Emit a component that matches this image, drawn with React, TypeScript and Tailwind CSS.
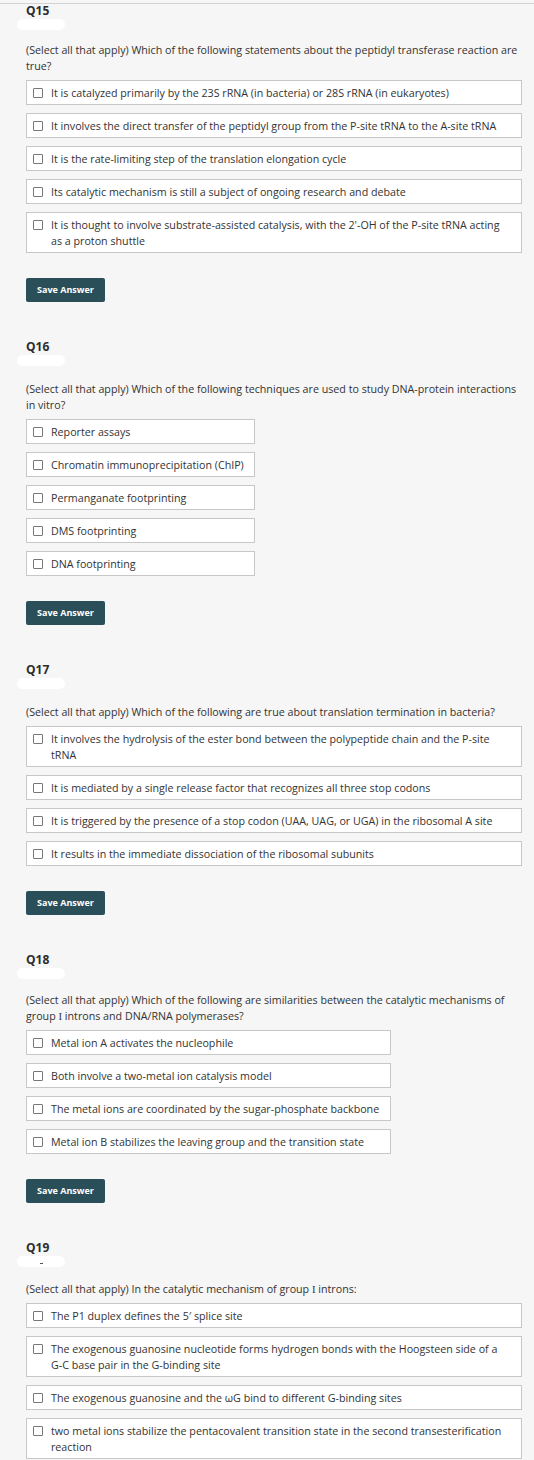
import React from "react";

type Q = {
  label: string;
  text: React.ReactNode;
  options: React.ReactNode[];
  width: string;
  dash?: boolean;
  textGap: string;
};

const I = () => <span style={{ fontFamily: "'Liberation Serif', serif" }}>I</span>;

const questions: Q[] = [
  {
    label: "Q15",
    textGap: "mt-[12px]",
    text: "(Select all that apply) Which of the following statements about the peptidyl transferase reaction are true?",
    width: "w-[496px]",
    options: [
      "It is catalyzed primarily by the 23S rRNA (in bacteria) or 28S rRNA (in eukaryotes)",
      "It involves the direct transfer of the peptidyl group from the P-site tRNA to the A-site tRNA",
      "It is the rate-limiting step of the translation elongation cycle",
      "Its catalytic mechanism is still a subject of ongoing research and debate",
      "It is thought to involve substrate-assisted catalysis, with the 2'-OH of the P-site tRNA acting as a proton shuttle",
    ],
  },
  {
    label: "Q16",
    textGap: "mt-[15px]",
    text: "(Select all that apply) Which of the following techniques are used to study DNA-protein interactions in vitro?",
    width: "w-[229px]",
    options: [
      "Reporter assays",
      "Chromatin immunoprecipitation (ChIP)",
      "Permanganate footprinting",
      "DMS footprinting",
      "DNA footprinting",
    ],
  },
  {
    label: "Q17",
    textGap: "mt-[15px]",
    text: "(Select all that apply) Which of the following are true about translation termination in bacteria?",
    width: "w-[496px]",
    options: [
      "It involves the hydrolysis of the ester bond between the polypeptide chain and the P-site tRNA",
      "It is mediated by a single release factor that recognizes all three stop codons",
      "It is triggered by the presence of a stop codon (UAA, UAG, or UGA) in the ribosomal A site",
      "It results in the immediate dissociation of the ribosomal subunits",
    ],
  },
  {
    label: "Q18",
    textGap: "mt-[13px]",
    text: (
      <>
        (Select all that apply) Which of the following are similarities between the catalytic mechanisms of group <I /> introns and DNA/RNA polymerases?
      </>
    ),
    width: "w-[365px]",
    options: [
      "Metal ion A activates the nucleophile",
      "Both involve a two-metal ion catalysis model",
      "The metal ions are coordinated by the sugar-phosphate backbone",
      "Metal ion B stabilizes the leaving group and the transition state",
    ],
  },
  {
    label: "Q19",
    textGap: "mt-[14px]",
    dash: true,
    text: (
      <>
        (Select all that apply) In the catalytic mechanism of group <I /> introns:
      </>
    ),
    width: "w-[496px]",
    options: [
      "The P1 duplex defines the 5\u2032 splice site",
      "The exogenous guanosine nucleotide forms hydrogen bonds with the Hoogsteen side of a G\u2011C base pair in the G-binding site",
      "The exogenous guanosine and the \u03c9G bind to different G-binding sites",
      "two metal ions stabilize the pentacovalent transition state in the second transesterification reaction",
    ],
  },
];

function Question({ q, first }: { q: Q; first: boolean }) {
  return (
    <div className={first ? "" : "mt-[38px]"}>
      <div className="text-[12px] leading-[14px] font-bold text-[#2d2d2d]">{q.label}</div>
      <div className="relative mt-[1px] -ml-[9px] h-[11px] w-[48px] rounded-full bg-white blur-[0.5px]">
        {q.dash && <span className="absolute left-[23px] top-[7px] h-[1px] w-[3px] bg-[#555]" />}
      </div>
      <div className={`${q.textGap} text-[10.7px] leading-[16px] text-[#333]`}>{q.text}</div>
      <div className="mt-[6px] flex flex-col gap-[8px]">
        {q.options.map((o, i) => (
          <label
            key={i}
            className={`${q.width} flex items-start gap-[8px] border border-[#c7c7c7] bg-white pl-[6px] pr-[8px] py-[3.5px] text-[10.7px] leading-[16px] text-[#333]`}
          >
            <span className="mt-[3px] h-[10px] w-[10px] shrink-0 rounded-[1px] border border-[#777] bg-white" />
            <span>{o}</span>
          </label>
        ))}
      </div>
      <button className="mt-[25px] h-[24px] w-[79px] rounded-[2px] bg-[#2a4f59] text-[9px] font-bold text-white">
        Save Answer
      </button>
    </div>
  );
}

export default function App() {
  return (
    <div
      className="min-h-[1460px] w-[534px] bg-[#f6f6f6] pt-[3px]"
      style={{ fontFamily: "'Open Sans', 'Noto Sans', sans-serif" }}
    >
      <div className="border-t border-[#d3d3d3] pl-[26px] pr-[12px]">
        {questions.map((q, i) => (
          <Question key={q.label} q={q} first={i === 0} />
        ))}
      </div>
    </div>
  );
}
